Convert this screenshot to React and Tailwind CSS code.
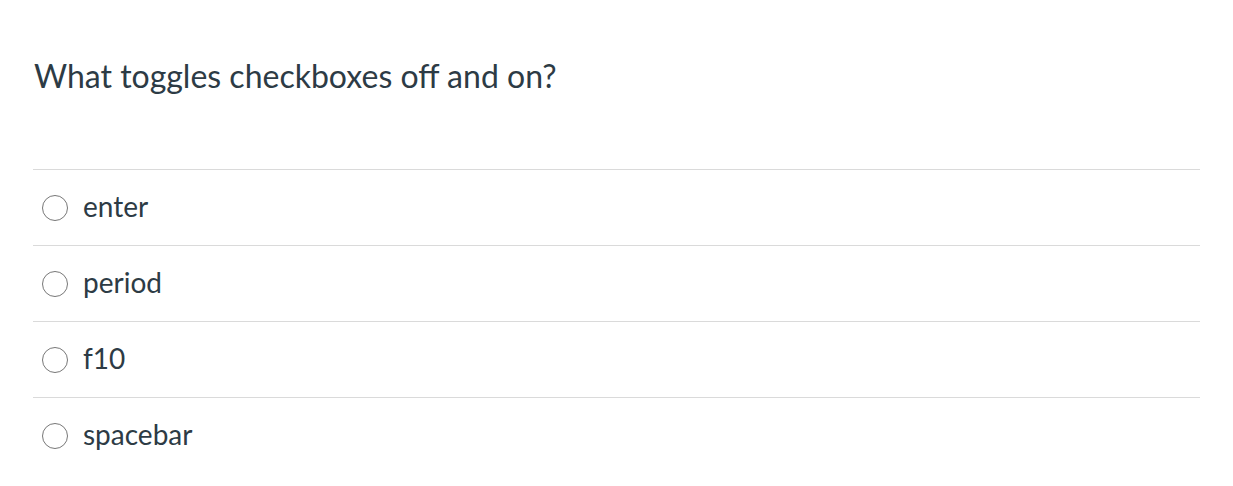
const options = ["enter", "period", "f10", "spacebar"];

function Radio() {
  return (
    <span className="inline-block w-[26px] h-[26px] rounded-full border-[1.5px] border-[#777777] bg-white shrink-0" />
  );
}

export default function App() {
  return (
    <div
      className="min-h-screen bg-white text-[#2d3b45] pl-[33px] pr-[33px]"
      style={{ fontFamily: "Lato, 'Liberation Sans', sans-serif" }}
    >
      <h1 className="pt-[54px] pl-[1px] text-[32px] leading-[44px] font-normal">
        What toggles checkboxes off and on?
      </h1>

      <div className="mt-[71px]">
        {options.map((opt) => (
          <div
            key={opt}
            className="h-[76px] border-t border-[#dadada] flex items-center gap-[15px] pl-[9px]"
          >
            <Radio />
            <span className="text-[28px] leading-none -mt-[3px]">{opt}</span>
          </div>
        ))}
      </div>
    </div>
  );
}
